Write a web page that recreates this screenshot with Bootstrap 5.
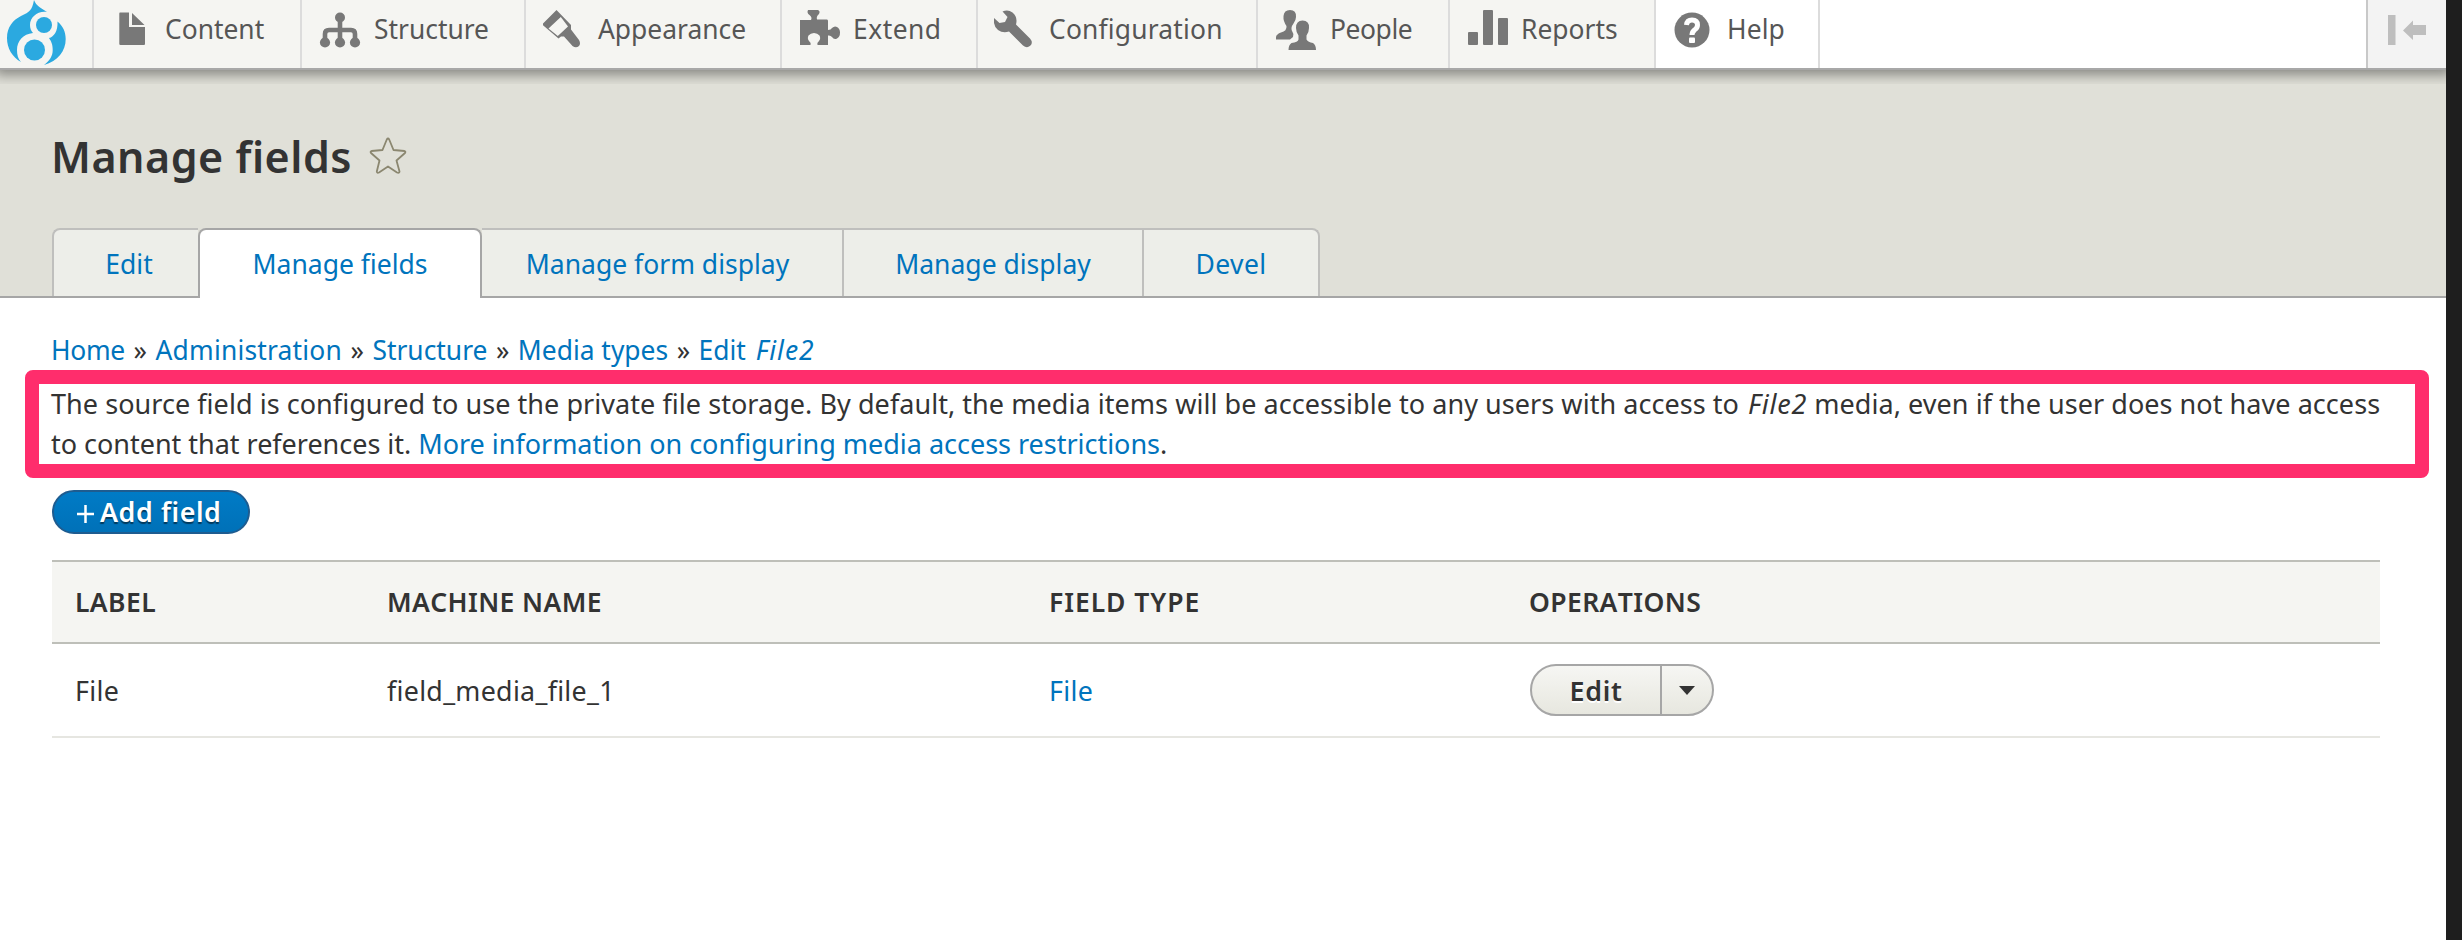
<!DOCTYPE html>
<html lang="en">
<head>
<meta charset="utf-8">
<meta name="viewport" content="width=device-width, initial-scale=1">
<title>Manage fields</title>
<link href="https://cdn.jsdelivr.net/npm/bootstrap@5.3.0/dist/css/bootstrap.min.css" rel="stylesheet">
<style>
body { font-family: "Noto Sans", sans-serif; font-size: 27px; line-height: 40px; color: #333; background: #1e1e1e; overflow: hidden; }
a { color: #0074bd; text-decoration: none; }
.page { width: 2446px; height: 940px; background: #fff; overflow: hidden; }
.toolbar { height: 70px; border-bottom: 2px solid #a8a8a8; box-shadow: 0 0 12px 5px rgba(0,0,0,.4); z-index: 2; background: #fff; clip-path: inset(0 0 -14px 0); }
.tool { height: 68px; background: #f5f5f2; border-right: 2px solid #dcdcdc; padding-left: 16px; font-size: 26.4px; line-height: 58px; color: #565656; white-space: nowrap; }
.tool svg { width: 48px; height: 68px; fill: #787878; margin-right: 7px; flex: none; }
.tool-home { width: 94px; padding: 0; }
.tool-home svg { width: 92px; margin: 0; fill: #2ba9e0; }
.w-content { width: 208px; }
.w-structure { width: 224px; padding-left: 17px; }
.w-appearance { width: 256px; padding-left: 17px; }
.w-extend { width: 196px; letter-spacing: .5px; }
.w-configuration { width: 280px; letter-spacing: .2px; }
.w-people { width: 192px; letter-spacing: -.4px; padding-left: 17px; }
.w-reports { width: 206px; }
.w-help { width: 164px; background: #fff; letter-spacing: .1px; }
.tool-toggle { width: 80px; height: 68px; background: #f3f3f3; border-left: 2px solid #c8c8c8; }
.page-head { height: 228px; background: #e0e0d8; border-bottom: 2px solid #a6a6a6; padding: 56px 0 0 52px; }
.page-head h1 { font-size: 43px; font-weight: 600; line-height: 61px; height: 60px; letter-spacing: .5px; color: #333; margin: 0 15px 0 -1px; }
.tab-row { margin-top: 42px; border: 0; }
.tab-row .nav-link { height: 68px; padding: 0; text-align: center; line-height: 68px; font-size: 26.5px; color: #0074bd; background: #edeee9; border: 2px solid #bfbfbd; border-width: 2px 2px 0 0; border-radius: 0; margin: 0; }
.tab-row .tab-edit { width: 146px; padding-left: 6px; border-width: 2px 0 0 2px; border-top-left-radius: 8px; }
.tab-row .tab-fields { width: 284px; height: 70px; background: #fff; border: 2px solid #a6a6a6; border-bottom: 0; border-radius: 8px 8px 0 0; }
.tab-row .tab-form { width: 362px; padding-right: 9px; }
.tab-row .tab-display { width: 300px; }
.tab-row .tab-devel { width: 176px; letter-spacing: .4px; border-top-right-radius: 8px; }
.page-body { padding: 32px 66px 0 52px; }
.crumbs { font-size: 26.4px; line-height: 41px; height: 40px; white-space: nowrap; }
.crumbs li:first-child { margin-left: -1px; letter-spacing: -.3px; }
.crumbs li:nth-child(2) { letter-spacing: .2px; }
.crumbs li + li::before { content: "»"; color: #333; padding: 0 8.5px; }
.crumbs em { letter-spacing: 1px; margin-left: 3px; }
.note { margin: 0 -49px 12px -27px; padding-left: 12px; border: 14px solid #ff2d6c; border-radius: 8px; height: 108px; line-height: 40.400px; white-space: nowrap; }
.note-lead { letter-spacing: .05px; }
.note-lead em { letter-spacing: .8px; margin: 0 0 0 2px; }
.note-more { letter-spacing: -.02px; }
.add-btn { width: 198px; height: 44px; border: 2px solid #1e5c90; border-radius: 22px; background: linear-gradient(#007bc6, #0071b8); color: #fff; font-weight: 600; font-size: 26.8px; line-height: 40px; padding: 0 0 0 22px; letter-spacing: .6px; text-shadow: 0 2px 1px rgba(0,0,0,.5); }
.add-btn:hover { color: #fff; }
.add-btn svg { width: 20px; height: 20px; margin: 4px 4px 0 0; }
.field-table { margin: 26px 0 0; table-layout: fixed; border-top: 2px solid #bebfb9; color: #333; --bs-table-color: #333; }
.field-table > :not(caption) > * > * { padding: 0 24px 0 23px; border: 0; box-shadow: none; vertical-align: middle; }
.field-table th { height: 82px; background: #f5f5f2; border-bottom: 2px solid #bebfb9 !important; font-size: 26.5px; font-weight: 600; letter-spacing: .4px; font-kerning: none; }
.field-table .type-head { letter-spacing: .95px; }
.field-table td { height: 94px; border-bottom: 2px solid #e6e6e1 !important; font-size: 26.8px; line-height: 41px; letter-spacing: .3px; }
.drop { width: 184px; height: 52px; margin-left: 1px; border: 2px solid #a6a6a6; border-radius: 26px; background: linear-gradient(#f6f6f3, #e7e7df); font-weight: 600; line-height: 49px; }
.drop-main { width: 130px; border-right: 2px solid #a6a6a6; text-shadow: 0 2px #fff; letter-spacing: .7px; text-align: center; }
</style>
</head>
<body>
<div class="page">
  <nav class="toolbar d-flex position-relative">
    <a class="tool tool-home d-flex" href="#" aria-label="Home"><svg viewBox="0 0 92 68"><path d="M34 0C36 6 42 8.500 47 12C38 10.500 30 17 30 25C30 28 31 31 33 33C23 34 17 41 17 50C17 55 18 59 21 62C12 57 7 48 7 38C7 27 13 20 21 16C30 12 32 10 34 0ZM57.500 21.500C63 26 65.700 32 65.700 39C65.700 51 58 61 44 65C50 60 52.700 56 52.700 50C52.700 44 51 41 49 38C54 37 58 31 57.500 21.500Z"/><circle cx="44" cy="25" r="8"/><circle cx="34.500" cy="50" r="10.500"/></svg></a>
    <a class="tool w-content d-flex" href="#"><svg viewBox="110 0 48 68"><path d="M120 12.500H129V27H145V44Q145 45 144 45H120.500Q119.300 45 119.300 44V13.500Q119.300 12.500 120 12.500ZM132 13L144.500 25H132Z"/></svg><span>Content</span></a>
    <a class="tool w-structure d-flex" href="#"><svg viewBox="319 0 48 68"><circle cx="340" cy="17.500" r="5"/><circle cx="325" cy="42.500" r="5.100"/><circle cx="340" cy="42.500" r="5.100"/><circle cx="355" cy="42.500" r="5.100"/><path d="M340 17V42M325 42V34Q325 30 329 30H351Q355 30 355 34V42" fill="none" stroke="#787878" stroke-width="4.600"/></svg><span>Structure</span></a>
    <a class="tool w-appearance d-flex" href="#"><svg viewBox="543 0 48 68"><path fill-rule="evenodd" d="M542 24.500L556.500 10L571 25V29.500L579 40Q581 43.500 579 46Q576 48.500 572.500 46L564 36.500H561L558.500 38.500ZM548.500 28.500L557.800 36L568 26.500L560.800 17Z"/></svg><span>Appearance</span></a>
    <a class="tool w-extend d-flex" href="#"><svg viewBox="798 0 48 68"><path d="M809 10H818Q820.500 11 819 14Q816 16.500 817 19.500H827Q828 19.500 828 21V30Q831 30 832 28Q834.500 25.500 837 27Q840 28.500 840 32.500Q840 37 837 38.500Q834 40 832 37Q830.500 35 828 35.500V45H817.500Q816.500 43 819 41Q821 38.500 819.500 35.500Q817.500 33 814 33Q810.500 33 808.500 35.500Q807 38.500 809 41Q811.500 43 810.500 45H800V20H811Q812.500 17.500 809.500 15Q806.500 13 808 10Z"/></svg><span>Extend</span></a>
    <a class="tool w-configuration d-flex" href="#"><svg viewBox="994 0 48 68"><path d="M1002.500 11.500Q1008 9 1012.500 12.500Q1018 17 1016 24.500L1030 38.500Q1033 42 1031 45Q1027.500 49 1023 45.500L1009 31.500Q1003 33.500 998 30Q993 26 994 18L999.500 23L1005 22L1007.500 17L1003 12Z"/></svg><span>Configuration</span></a>
    <a class="tool w-people d-flex" href="#"><svg viewBox="1275 0 48 68"><path d="M1290 10Q1296.500 10 1296 17Q1296 20 1293.500 23.500Q1290 28 1292.500 32Q1294 33.500 1293 37L1290 39.500H1276V37Q1276.500 34 1281 32.500Q1287 31 1286.500 26Q1283 21 1283.500 16Q1284 10 1290 10Z"/><path d="M1302.500 20.500Q1309.500 20.500 1309 28Q1309 32 1306.500 35.500V39.500Q1308 42 1313 43Q1316 45 1316 50H1288.500Q1288.500 45 1291.500 43Q1298 42 1298.500 39.500V35.500Q1296 32 1296 28Q1296 20.500 1302.500 20.500Z"/></svg><span>People</span></a>
    <a class="tool w-reports d-flex" href="#"><svg viewBox="1466 0 48 68"><rect x="1468" y="32" width="10" height="13" rx="1"/><rect x="1483" y="10" width="10" height="35" rx="1"/><rect x="1498" y="18" width="10" height="27" rx="1"/></svg><span>Reports</span></a>
    <a class="tool w-help d-flex" href="#"><svg viewBox="1672 0 48 68"><circle cx="1692" cy="30" r="17.500"/><path d="M1686.500 25Q1687 20 1692 20Q1697.500 20 1697.500 25Q1697.500 28 1694.500 30Q1692 32 1692 35" fill="none" stroke="#fff" stroke-width="5"/><rect x="1689" y="37.500" width="6" height="5.500" rx="1" fill="#fff"/></svg><span>Help</span></a>
    <a class="tool-toggle ms-auto" href="#" aria-label="Vertical orientation"><svg class="d-block" width="78" height="68" viewBox="2368 0 78 68" fill="#bebebe"><path d="M2388 15H2395.500V45H2388ZM2403 30.500L2413 20.500V25H2426V35H2413V40Z"/></svg></a>
  </nav>
  <header class="page-head">
    <div class="d-flex">
      <h1>Manage fields</h1>
      <svg width="42" height="60" viewBox="367 126 42 60" fill="none" stroke="#8b8770" stroke-width="1.800" stroke-linejoin="round"><path d="M386.800 139.500Q388 137.500 389.200 139.500L393.500 150L404.500 151Q406 151.500 405 153L396.500 160.500L399.500 171.500Q399.200 173.500 397 172.500L388 166.500L379 172.500Q377 173.500 376.800 171.500L379.500 160.500L371 153Q370 151.500 371.500 151L382.500 150Z"/></svg>
    </div>
    <nav class="nav nav-tabs tab-row">
      <a class="nav-link tab-edit" href="#">Edit</a>
      <a class="nav-link tab-fields" href="#" aria-current="page">Manage fields</a>
      <a class="nav-link tab-form" href="#">Manage form display</a>
      <a class="nav-link tab-display" href="#">Manage display</a>
      <a class="nav-link tab-devel" href="#">Devel</a>
    </nav>
  </header>
  <main class="page-body">
    <ol class="crumbs list-unstyled d-flex m-0">
      <li><a href="#">Home</a></li><li><a href="#">Administration</a></li><li><a href="#">Structure</a></li><li><a href="#">Media types</a></li><li><a href="#">Edit <em>File2</em></a></li>
    </ol>
    <div class="note"><span class="note-lead">The source field is configured to use the private file storage. By default, the media items will be accessible to any users with access to <em>File2</em> media, even if the user does not have access</span><br><span class="note-more">to content that references it. <a href="#">More information on configuring media access restrictions</a>.</span></div>
    <a class="btn add-btn d-flex align-items-center" href="#"><svg viewBox="0 0 20 20"><path d="M1 10H18M9.500 1V19" stroke="#fff" stroke-width="2.500"/></svg>Add field</a>
    <table class="table field-table">
      <colgroup><col style="width:312px"><col style="width:662px"><col style="width:480px"><col></colgroup>
      <thead><tr><th>LABEL</th><th>MACHINE NAME</th><th class="type-head">FIELD TYPE</th><th>OPERATIONS</th></tr></thead>
      <tbody><tr><td>File</td><td>field_media_file_1</td><td><a href="#">File</a></td>
        <td><div class="drop d-flex"><div class="drop-main">Edit</div><svg class="m-auto" width="16" height="9" viewBox="0 0 16 9"><path d="M0 0H16L8 9Z" fill="#333"/></svg></div></td></tr></tbody>
    </table>
  </main>
</div>
<script src="https://cdn.jsdelivr.net/npm/bootstrap@5.3.0/dist/js/bootstrap.bundle.min.js"></script>
</body>
</html>
